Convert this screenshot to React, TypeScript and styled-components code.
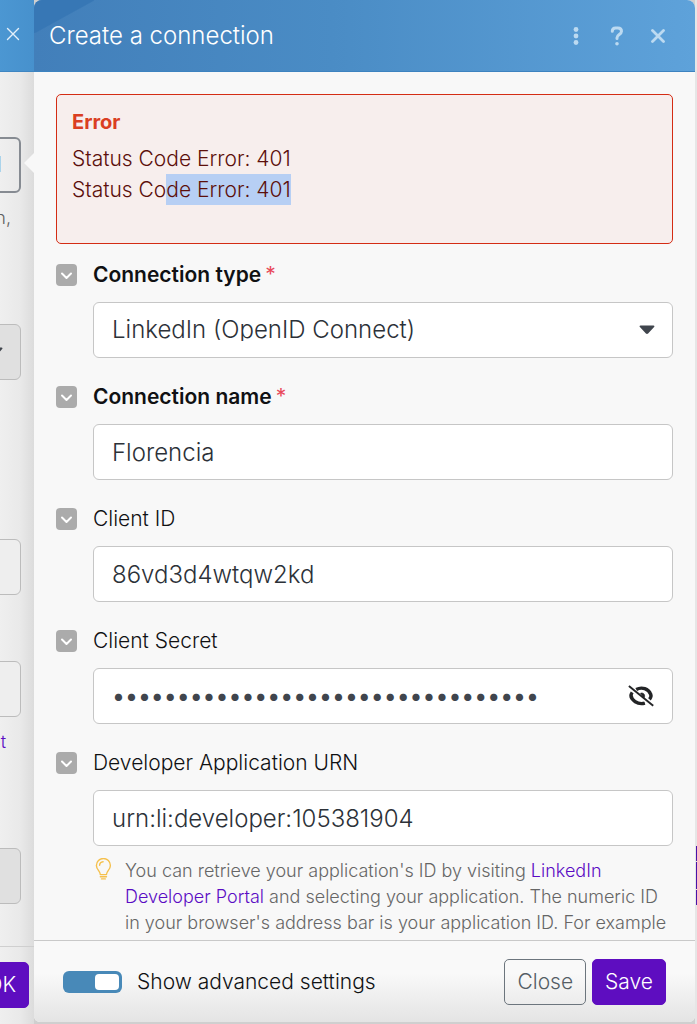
import React, { useState } from "react";
import styled, { createGlobalStyle } from "styled-components";

const GlobalStyle = createGlobalStyle`
  *, *::before, *::after { box-sizing: border-box; }
  html, body, #root { height: 100%; }
  body {
    margin: 0;
    background: #cfcfcf;
    color: #101113;
    font-family: Inter, "Liberation Sans", sans-serif;
    font-size: 21px;
    font-weight: 300;
    line-height: 22px;
  }
  button, input, select { font: inherit; color: inherit; margin: 0; }
  p, h1, h2 { margin: 0; font: inherit; }
`;

const Screen = styled.div`
  display: flex;
  min-height: 100vh;
  overflow: hidden;
`;

/* Panel behind the dialog, of which only the right edge shows */
const Rail = styled.aside`
  position: relative;
  flex: none;
  width: 34px;
  display: flex;
  justify-content: flex-end;
  overflow: hidden;
  background: linear-gradient(to right, #efefef, #e9e9e9 60%, #dcdcdc);
`;

const RailPanel = styled.div`
  flex: none;
  width: 300px;
  display: flex;
  flex-direction: column;
`;

const RailHeader = styled.div`
  height: 72px;
  padding: 0 11px 4px;
  display: flex;
  align-items: center;
  justify-content: flex-end;
  background: linear-gradient(to right, #4f9bd6 80%, #4791cd);
  border-bottom: 1px solid #3f86c2;
`;

const RailBody = styled.div`
  flex: 1;
  display: flex;
  flex-direction: column;
  padding: 65px 13px 0 0;
`;

const RailBox = styled.div<{ $gap?: number; $tone?: "plain" | "strong" | "filled" }>`
  height: 56px;
  margin-top: ${(p) => p.$gap ?? 0}px;
  padding-right: 17px;
  display: flex;
  align-items: center;
  justify-content: flex-end;
  color: #6f757c;
  border: ${(p) => (p.$tone === "strong" ? "2px solid #868b92" : "1px solid #bcbcbc")};
  border-radius: 6px;
  background: ${(p) => (p.$tone === "plain" ? "#eeeeee" : p.$tone === "filled" ? "#e0e0e0" : "transparent")};
`;

const RailNote = styled.p`
  margin-top: 14px;
  padding-right: 10px;
  font-size: 18px;
  text-align: right;
  color: #606060;
`;

const RailLink = styled.a`
  display: block;
  margin-top: 14px;
  padding-right: 15px;
  font-size: 18px;
  text-align: right;
  text-decoration: none;
  color: #5b0cc4;
`;

const RailFooter = styled.div`
  height: 78px;
  padding: 15px 5px 0;
  display: flex;
  justify-content: flex-end;
  align-items: flex-start;
  border-top: 1px solid #cfcfcf;
`;

const Pointer = styled.span`
  position: absolute;
  top: 153px;
  right: 0;
  border: 10px solid transparent;
  border-left: 0;
  border-right-color: #f8f8f8;
`;

const Dialog = styled.section`
  flex: 1;
  min-width: 0;
  display: flex;
  flex-direction: column;
  margin-bottom: 2px;
  background: #f8f8f8;
  border-radius: 8px 8px 6px 6px;
  overflow: hidden;
`;

const Header = styled.header`
  height: 72px;
  flex: none;
  display: flex;
  align-items: center;
  padding: 0 26px 0 15px;
  color: #fff;
  border-bottom: 1px solid #3d83c0;
  background:
    linear-gradient(to bottom right, #3777b5 50%, transparent 52%) 0 0 / 60px 33px no-repeat,
    linear-gradient(to right, #427fba, #4a8cc5 45%, #5ea2da);
`;

const Title = styled.h1`
  flex: 1;
  font-size: 24px;
  line-height: 28px;
`;

const HeaderActions = styled.div`
  display: flex;
  gap: 19px;
`;

const IconButton = styled.button`
  width: 20px;
  height: 24px;
  padding: 0;
  border: 0;
  display: grid;
  place-items: center;
  background: none;
  color: #e4f0fa;
  cursor: pointer;
`;

const HeaderButton = styled(IconButton)`
  width: 22px;
  color: #bcdaf1;
`;

const Body = styled.div`
  flex: 1;
  padding: 22px 22px 0;
`;

const Alert = styled.div`
  min-height: 150px;
  padding: 12px 15px;
  border: 1px solid #d42c14;
  border-radius: 5px;
  background: #f7eeed;
  color: #5c0f0b;
  line-height: 31px;
`;

const AlertTitle = styled.h2`
  margin-bottom: 5px;
  font-size: 20px;
  font-weight: 700;
  color: #da3e22;
`;

const Marked = styled.mark`
  display: inline-block;
  color: inherit;
  background: #b7cff4;
`;

const Field = styled.div`
  display: grid;
  grid-template-columns: 21px minmax(0, 1fr);
  column-gap: 16px;
  row-gap: 16px;
  margin-top: 28px;

  ${Alert} + & { margin-top: 20px; }
`;

const Toggle = styled.button`
  width: 21px;
  height: 22px;
  padding: 0;
  border: 0;
  border-radius: 4px;
  display: grid;
  place-items: center;
  background: #ababab;
  color: #fff;
`;

const Label = styled.label<{ $required?: boolean }>`
  font-weight: ${(p) => (p.$required ? 600 : "inherit")};
`;

const Star = styled.span`
  margin-left: 4px;
  font-weight: 400;
  color: #e8485a;
`;

const Control = styled.div`
  grid-column: 2;
  height: 56px;
  display: flex;
  align-items: center;
  padding-right: 17px;
  border: 1px solid #c6c6c6;
  border-radius: 6px;
  background: #fff;
  color: #2c3138;
`;

const TextInput = styled.input`
  flex: 1;
  min-width: 0;
  height: 100%;
  padding: 0 18px;
  border: 0;
  outline: 0;
  background: none;
  font-size: 24px;

  &[type="password"] {
    font-size: 23px;
    font-weight: 400;
    color: #40454d;
  }
`;

const Select = styled.select`
  flex: 1;
  min-width: 0;
  height: 100%;
  padding: 0 18px;
  border: 0;
  outline: 0;
  appearance: none;
  background: none;
  font-size: 24px;
`;

const RevealButton = styled(IconButton)`
  width: 28px;
  color: #232426;
`;

const Hint = styled.div`
  grid-column: 2;
  display: flex;
  gap: 13px;
  margin-top: -4px;
  padding-left: 2px;
  font-size: 18px;
  line-height: 26px;
  color: #666666;

  svg { flex: none; }
`;

const Link = styled.a`
  color: #5b0cc4;
  text-decoration: none;
`;

const Footer = styled.footer`
  flex: none;
  height: 82px;
  display: flex;
  align-items: center;
  gap: 6px;
  padding: 0 29px;
  border-top: 1px solid #c9c9c9;
  background: linear-gradient(#f9f9f9 40%, #e4e4e4);
`;

const SwitchLabel = styled.label`
  flex: 1;
  display: flex;
  align-items: center;
  gap: 15px;
`;

const Switch = styled.input.attrs({ type: "checkbox" })`
  appearance: none;
  width: 59px;
  height: 22px;
  padding: 3px;
  display: flex;
  border-radius: 6px;
  background: #9a9a9a;

  &::after {
    content: "";
    width: 24px;
    border-radius: 4px;
    background: #fff;
  }
  &:checked {
    justify-content: flex-end;
    background: #4889b8;
  }
`;

const Button = styled.button<{ $primary?: boolean }>`
  height: 46px;
  padding: 0 12px;
  border: ${(p) => (p.$primary ? "1px solid #5e0dc0" : "1px solid #6c757d")};
  border-radius: 5px;
  background: ${(p) => (p.$primary ? "#5e0dc0" : "transparent")};
  color: ${(p) => (p.$primary ? "#fff" : "#545d65")};
  cursor: pointer;
`;

const Edge = styled.div`
  flex: none;
  width: 2px;
  display: flex;
  flex-direction: column;
  gap: 1px;
  padding-top: 846px;
  background: #e6e6e6;
`;

const EdgeMark = styled.span<{ $size: number }>`
  height: ${(p) => p.$size}px;
  margin-left: 1px;
  background: #4a12a8;
`;

const Cross = ({ size, weight }: { size: number; weight: number }) => (
  <svg width={size} height={size} viewBox="0 0 14 14" fill="none" stroke="currentColor" strokeWidth={weight} strokeLinecap="round" aria-hidden="true">
    <path d="M1.500 1.500l11 11M12.500 1.500l-11 11" />
  </svg>
);

const Chevron = () => (
  <svg width="13" height="9" viewBox="0 0 13 9" fill="none" stroke="currentColor" strokeWidth="2" strokeLinecap="round" strokeLinejoin="round" aria-hidden="true">
    <path d="M2 2.500l4.500 4.500L11 2.500" />
  </svg>
);

const Caret = () => (
  <svg width="16" height="10" viewBox="0 0 16 10" fill="#40454d" aria-hidden="true">
    <path d="M1.500 .5h13c.9 0 1.300 1 .6 1.600L9.100 8.600c-.6.6-1.600.6-2.200 0L.9 2.100C.2 1.500.6.5 1.500.5z" />
  </svg>
);

const EyeOff = () => (
  <svg width="26" height="22" viewBox="0 0 26 22" fill="none" stroke="currentColor" aria-hidden="true">
    <path d="M8.200 4.600C14 1.300 20.500 4 22.700 9.300c.7 1.500.2 3.300-1.200 5" strokeWidth="3.400" />
    <path d="M4.200 7.400C1.700 11 4 14.500 7.300 16.800c3 1.900 6.600 2.100 9.600 1.300" strokeWidth="3.400" />
    <path d="M12.500 8.200c2-.9 4.200.6 4.200 2.800 0 .8-.3 1.400-.7 1.900z" fill="currentColor" strokeWidth=".6" />
    <path d="M2 3.600L24 21.600" stroke="#fff" strokeWidth="1.600" />
    <path d="M.9 .9L25.200 20.800" strokeWidth="1.900" />
  </svg>
);

const Bulb = () => (
  <svg width="17" height="22" viewBox="0 0 17 22" fill="none" stroke="#f5c04d" strokeWidth="1.400" strokeLinecap="round" strokeLinejoin="round" aria-hidden="true">
    <path d="M5.300 16.600c0-3.600-3.900-4.900-3.900-9.100a7 7 0 0 1 14 0c0 4.200-3.900 5.500-3.900 9.100z" />
    <path d="M4.600 7.300a3.800 3.800 0 0 1 3.500-3.600" />
    <path d="M5.300 18.700h6.200M6.500 20.900h3.800" />
  </svg>
);

interface FieldRowProps {
  id: string;
  label: string;
  required?: boolean;
  children: React.ReactNode;
  hint?: React.ReactNode;
}

const FieldRow = ({ id, label, required, children, hint }: FieldRowProps) => (
  <Field>
    <Toggle type="button" aria-label={`Options for ${label}`}>
      <Chevron />
    </Toggle>
    <Label htmlFor={id} $required={required}>
      {label}
      {required && <Star>*</Star>}
    </Label>
    <Control>{children}</Control>
    {hint}
  </Field>
);

export default function App() {
  const [advanced, setAdvanced] = useState(true);

  return (
    <>
      <GlobalStyle />
      <Screen>
        <Rail>
          <RailPanel>
            <RailHeader>
              <IconButton type="button" aria-label="Close panel">
                <Cross size={14} weight={1.4} />
              </IconButton>
            </RailHeader>
            <RailBody>
              <RailBox $tone="strong">Add</RailBox>
              <RailNote>n,</RailNote>
              <RailBox $gap={95} $tone="filled">
                <Caret />
              </RailBox>
              <RailBox $gap={159} $tone="plain" />
              <RailBox $gap={66} $tone="plain" />
              <RailLink href="#">t</RailLink>
              <RailBox $gap={95} $tone="filled" />
            </RailBody>
            <RailFooter>
              <Button type="button" $primary>
                OK
              </Button>
            </RailFooter>
          </RailPanel>
          <Pointer />
        </Rail>

        <Dialog role="dialog" aria-labelledby="dialog-title">
          <Header>
            <Title id="dialog-title">Create a connection</Title>
            <HeaderActions>
              <HeaderButton type="button" aria-label="More">
                <svg width="6" height="18" viewBox="0 0 6 18" fill="currentColor" aria-hidden="true">
                  <circle cx="3" cy="2.500" r="2.400" />
                  <circle cx="3" cy="9" r="2.400" />
                  <circle cx="3" cy="15.500" r="2.400" />
                </svg>
              </HeaderButton>
              <HeaderButton type="button" aria-label="Help">
                <svg width="14" height="20" viewBox="0 0 14 20" fill="none" stroke="currentColor" strokeWidth="3" strokeLinecap="round" strokeLinejoin="round" aria-hidden="true">
                  <path d="M2.300 5.300C2.300 3.300 3.500 2 5.600 2h2.300c2.200 0 3.600 1.400 3.600 3.300 0 3.200-4.500 3.200-4.500 6.400v.8" />
                  <path d="M7 17.700v.1" strokeWidth="3.600" />
                </svg>
              </HeaderButton>
              <HeaderButton type="button" aria-label="Close dialog">
                <Cross size={14} weight={2.8} />
              </HeaderButton>
            </HeaderActions>
          </Header>

          <Body>
            <Alert role="alert">
              <AlertTitle>Error</AlertTitle>
              <p>Status Code Error: 401</p>
              <p>
                Status Co<Marked>de Error: 401</Marked>
              </p>
            </Alert>

            <FieldRow id="type" label="Connection type" required>
              <Select id="type">
                <option>LinkedIn (OpenID Connect)</option>
              </Select>
              <Caret />
            </FieldRow>
            <FieldRow id="name" label="Connection name" required>
              <TextInput id="name" defaultValue="Florencia" />
            </FieldRow>
            <FieldRow id="client-id" label="Client ID">
              <TextInput id="client-id" defaultValue="86vd3d4wtqw2kd" />
            </FieldRow>
            <FieldRow id="secret" label="Client Secret">
              <TextInput id="secret" type="password" defaultValue={"x".repeat(33)} />
              <RevealButton type="button" aria-label="Show secret">
                <EyeOff />
              </RevealButton>
            </FieldRow>
            <FieldRow
              id="urn"
              label="Developer Application URN"
              hint={
                <Hint>
                  <Bulb />
                  <p>
                    You can retrieve your application's ID by visiting <Link href="#">LinkedIn Developer Portal</Link> and
                    selecting your application. The numeric ID in your browser's address bar is your application ID. For
                    example
                  </p>
                </Hint>
              }
            >
              <TextInput id="urn" defaultValue="urn:li:developer:105381904" />
            </FieldRow>
          </Body>

          <Footer>
            <SwitchLabel>
              <Switch checked={advanced} onChange={(e) => setAdvanced(e.target.checked)} />
              Show advanced settings
            </SwitchLabel>
            <Button type="button">Close</Button>
            <Button type="button" $primary>
              Save
            </Button>
          </Footer>
        </Dialog>

        <Edge>
          <EdgeMark $size={15} />
          <EdgeMark $size={27} />
          <EdgeMark $size={15} />
        </Edge>
      </Screen>
    </>
  );
}
